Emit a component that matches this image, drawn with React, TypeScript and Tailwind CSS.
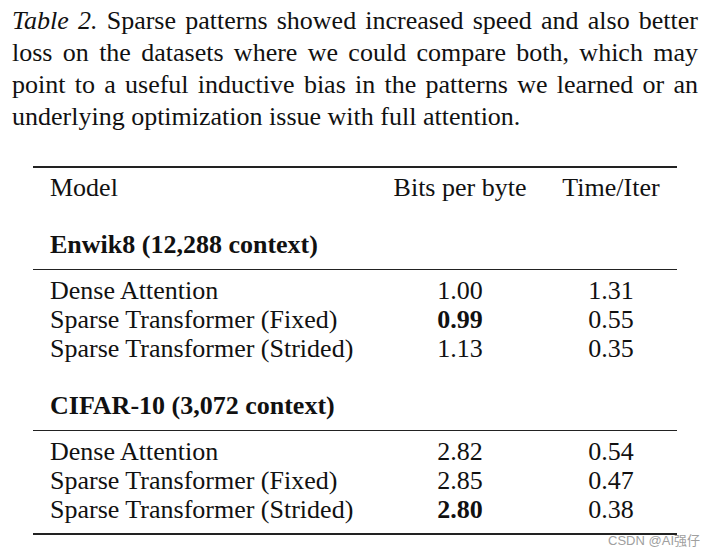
import React from 'react';

interface Row {
  model: string;
  bpb: string;
  time: string;
  best?: boolean;
}

interface Section {
  title: string;
  rows: Row[];
}

const sections: Section[] = [
  {
    title: 'Enwik8 (12,288 context)',
    rows: [
      { model: 'Dense Attention', bpb: '1.00', time: '1.31' },
      { model: 'Sparse Transformer (Fixed)', bpb: '0.99', time: '0.55', best: true },
      { model: 'Sparse Transformer (Strided)', bpb: '1.13', time: '0.35' },
    ],
  },
  {
    title: 'CIFAR-10 (3,072 context)',
    rows: [
      { model: 'Dense Attention', bpb: '2.82', time: '0.54' },
      { model: 'Sparse Transformer (Fixed)', bpb: '2.85', time: '0.47' },
      { model: 'Sparse Transformer (Strided)', bpb: '2.80', time: '0.38', best: true },
    ],
  },
];

const cols = 'grid grid-cols-[342px_170px_132px] h-[29px] leading-[29px]';
const justLine = 'text-justify [text-align-last:justify] whitespace-nowrap';

export default function App() {
  return (
    <div className="relative w-[716px] h-[555px] overflow-hidden bg-white text-[#111] font-['Liberation_Serif','Times_New_Roman',serif]">
      {/* Caption, line breaks as in the paper */}
      <div className="pl-3 pr-[18px] pt-[5px] text-[26px] leading-[32px]">
        <div className={justLine}>
          <i>Table 2.</i> Sparse patterns showed increased speed and also better
        </div>
        <div className={justLine}>loss on the datasets where we could compare both, which may</div>
        <div className={justLine}>point to a useful inductive bias in the patterns we learned or an</div>
        <div>underlying optimization issue with full attention.</div>
      </div>

      {/* Table */}
      <div className="ml-[33px] mt-[33px] w-[644px] text-[26px]">
        <div className="border-t-2 border-[#222]" />
        <div className={`${cols} mt-[5px]`}>
          <div className="pl-[17px]">Model</div>
          <div className="text-center">Bits per byte</div>
          <div className="text-center">Time/Iter</div>
        </div>

        {sections.map(s => (
          <div key={s.title} className="mt-[28px]">
            <div className="h-[29px] leading-[29px] pl-[17px] font-bold">{s.title}</div>
            <div className="mt-[10px] border-t border-[#222]" />
            <div className="mt-[6px]">
              {s.rows.map(r => (
                <div key={r.model} className={cols}>
                  <div className="pl-[17px]">{r.model}</div>
                  <div className={`text-center ${r.best ? 'font-bold' : ''}`}>{r.bpb}</div>
                  <div className="text-center">{r.time}</div>
                </div>
              ))}
            </div>
          </div>
        ))}

        <div className="mt-[9px] border-t-2 border-[#222]" />
      </div>

      {/* Watermark */}
      <div className="absolute right-[16px] top-[532px] text-[13px] leading-[17px] text-[#a0a0a0] font-['Liberation_Sans','Noto_Sans_CJK_SC',sans-serif]">
        CSDN @AI强仔
      </div>
    </div>
  );
}
